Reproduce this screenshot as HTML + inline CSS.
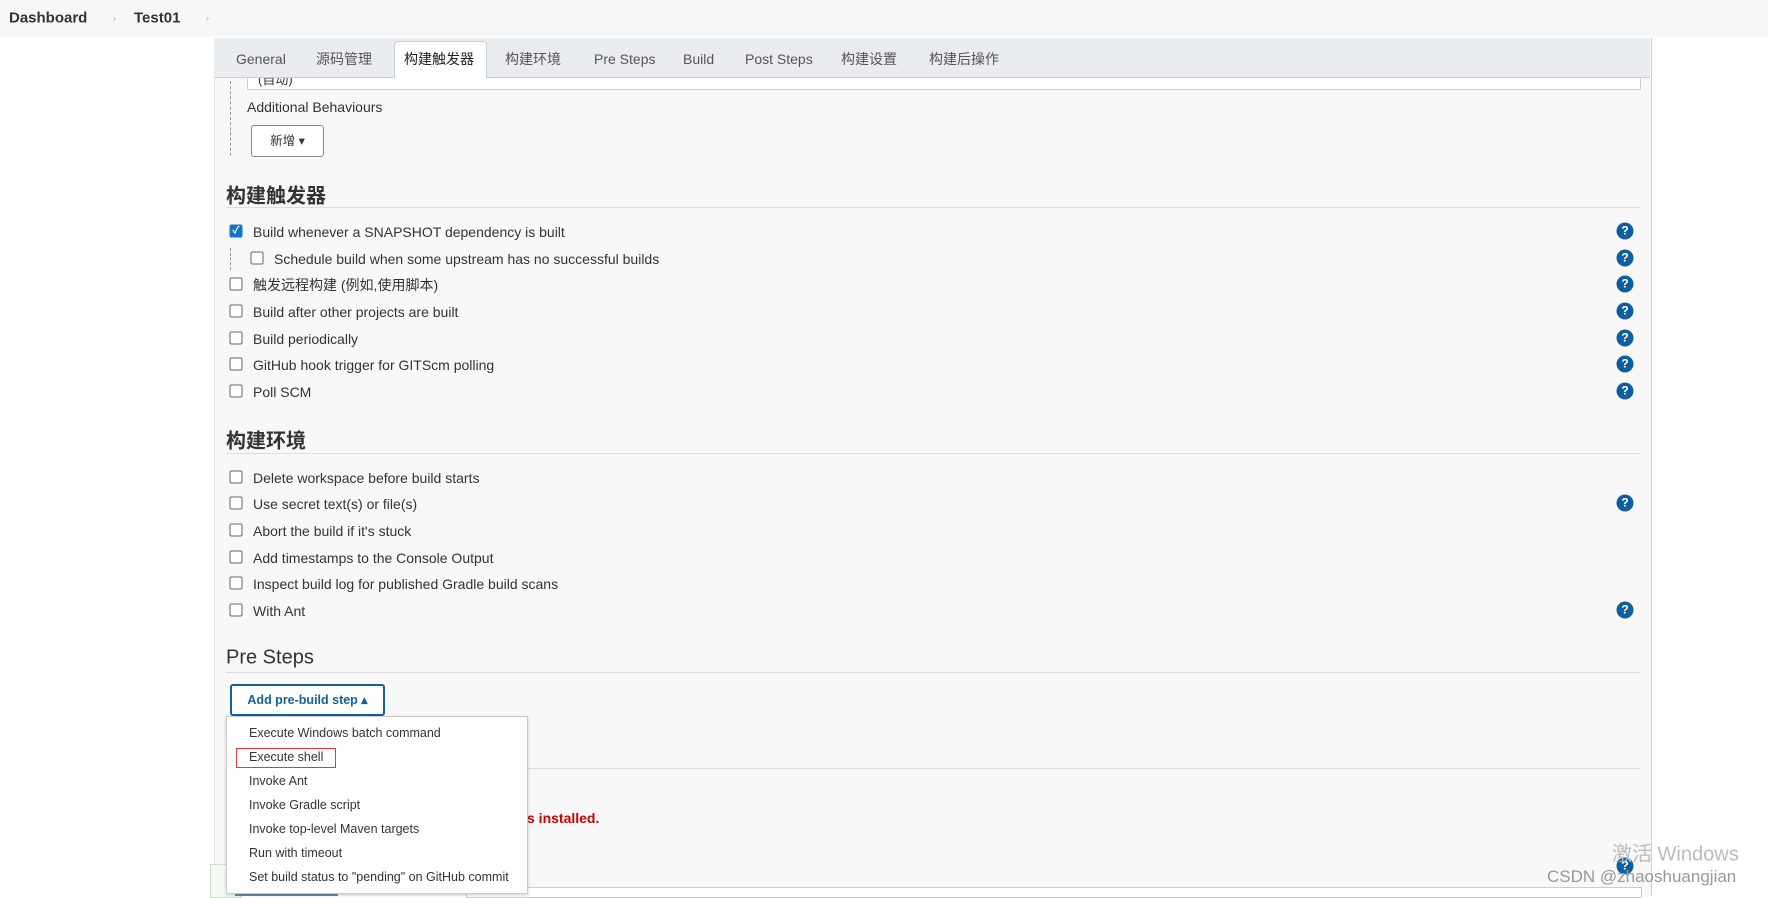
<!DOCTYPE html>
<html><head><meta charset="utf-8"><style>
body{margin:0;width:1768px;height:896px;background:#fff;position:relative;overflow:hidden;font-family:"Liberation Sans","Noto Sans CJK SC",sans-serif;color:#333}
.a{position:absolute;white-space:nowrap}
.t{font-size:14px;color:#333;transform:translateY(-50%)}
.cb{position:absolute;width:11px;height:11px;border:1px solid #666;border-radius:2px;background:#fff;transform:translate(-50%,-50%)}
.cb.on{background:#1a73c8;border-color:#1a73c8;color:#fff;font-size:10px;line-height:11px;text-align:center;font-weight:bold}
.h{position:absolute;width:17px;height:17px;border-radius:50%;background:#0f5f9e;color:#fff;font:bold 12px/17px "Liberation Sans",sans-serif;text-align:center;transform:translate(-50%,-50%)}
.line{position:absolute;height:1px;background:#ddd;left:226px;width:1414px}
.mi{position:absolute;left:249px;font-size:12.5px;color:#333;transform:translateY(-50%)}
</style></head><body>
<div class="a" style="left:0;top:0;width:1768px;height:37px;background:#f7f7f7"></div>
<div class="a t" style="left:9px;top:18px;font-weight:bold;font-size:15px">Dashboard</div>
<div class="a t" style="left:113px;top:18px;font-size:9px;color:#aaa">›</div>
<div class="a t" style="left:134px;top:18px;font-weight:bold;font-size:15px">Test01</div>
<div class="a t" style="left:206px;top:18px;font-size:9px;color:#aaa">›</div>
<div class="a" style="left:214px;top:38px;width:1436px;height:858px;background:#f8f8f8;border-right:1px solid #ccc;border-left:1px solid #e4e4e4"></div>
<div class="a" style="left:214px;top:38px;width:1436px;height:39px;background:#e9edf0;border-bottom:1px solid #c8cdd2"></div>
<div class="a" style="left:394px;top:41px;width:91px;height:37px;background:#fff;border:1px solid #c8cdd2;border-bottom:none;border-radius:4px 4px 0 0"></div>
<div class="a t" style="left:236px;top:59px;color:#555">General</div>
<div class="a t" style="left:316px;top:59px;color:#555">源码管理</div>
<div class="a t" style="left:404px;top:59px;color:#222">构建触发器</div>
<div class="a t" style="left:505px;top:59px;color:#555">构建环境</div>
<div class="a t" style="left:594px;top:59px;color:#555">Pre Steps</div>
<div class="a t" style="left:683px;top:59px;color:#555">Build</div>
<div class="a t" style="left:745px;top:59px;color:#555">Post Steps</div>
<div class="a t" style="left:841px;top:59px;color:#555">构建设置</div>
<div class="a t" style="left:929px;top:59px;color:#555">构建后操作</div>
<div class="a" style="left:247px;top:78px;width:1392px;height:11px;background:#fff;border:1px solid #ccc;border-top:none;overflow:hidden"><div style="position:absolute;left:10px;top:-9px;font-size:13px">(自动)</div></div>
<div class="a" style="left:230px;top:81px;height:75px;border-left:1px dashed #999"></div>
<div class="a t" style="left:247px;top:107px">Additional Behaviours</div>
<div class="a" style="left:251px;top:125px;width:71px;height:30px;border:1px solid #888;border-radius:3px;background:#fff;font-size:12.5px;line-height:30px;text-align:center">新增 ▾</div>
<div class="a t" style="left:226px;top:194px;font-size:20px;font-weight:bold;color:#333">构建触发器</div>
<div class="line" style="top:207px"></div>
<div class="cb on" style="left:236px;top:231px">✓</div><div class="a t" style="left:253px;top:232px">Build whenever a SNAPSHOT dependency is built</div>
<div class="a" style="left:230px;top:248px;height:22px;border-left:1px dashed #999"></div>
<div class="cb" style="left:257px;top:258px"></div><div class="a t" style="left:274px;top:259px">Schedule build when some upstream has no successful builds</div>
<div class="cb" style="left:236px;top:284px"></div><div class="a t" style="left:253px;top:285px">触发远程构建 (例如,使用脚本)</div>
<div class="cb" style="left:236px;top:311px"></div><div class="a t" style="left:253px;top:312px">Build after other projects are built</div>
<div class="cb" style="left:236px;top:338px"></div><div class="a t" style="left:253px;top:339px">Build periodically</div>
<div class="cb" style="left:236px;top:364px"></div><div class="a t" style="left:253px;top:365px">GitHub hook trigger for GITScm polling</div>
<div class="cb" style="left:236px;top:391px"></div><div class="a t" style="left:253px;top:392px">Poll SCM</div>
<div class="h" style="left:1625px;top:231px">?</div><div class="h" style="left:1625px;top:258px">?</div><div class="h" style="left:1625px;top:284px">?</div><div class="h" style="left:1625px;top:311px">?</div><div class="h" style="left:1625px;top:338px">?</div><div class="h" style="left:1625px;top:364px">?</div><div class="h" style="left:1625px;top:391px">?</div>
<div class="a t" style="left:226px;top:439px;font-size:20px;font-weight:bold">构建环境</div>
<div class="line" style="top:453px"></div>
<div class="cb" style="left:236px;top:477px"></div><div class="a t" style="left:253px;top:478px">Delete workspace before build starts</div>
<div class="cb" style="left:236px;top:503px"></div><div class="a t" style="left:253px;top:504px">Use secret text(s) or file(s)</div>
<div class="cb" style="left:236px;top:530px"></div><div class="a t" style="left:253px;top:531px">Abort the build if it's stuck</div>
<div class="cb" style="left:236px;top:557px"></div><div class="a t" style="left:253px;top:558px">Add timestamps to the Console Output</div>
<div class="cb" style="left:236px;top:583px"></div><div class="a t" style="left:253px;top:584px">Inspect build log for published Gradle build scans</div>
<div class="cb" style="left:236px;top:610px"></div><div class="a t" style="left:253px;top:611px">With Ant</div>
<div class="h" style="left:1625px;top:503px">?</div><div class="h" style="left:1625px;top:610px">?</div>
<div class="a t" style="left:226px;top:658px;font-size:20px">Pre Steps</div>
<div class="line" style="top:672px"></div>
<div class="line" style="top:768px"></div>
<div class="a" style="left:230px;top:684px;width:151px;height:28px;border:2px solid #14609a;border-radius:3px;background:#fff;color:#14609a;font-weight:bold;font-size:12.5px;line-height:28px;text-align:center">Add pre-build step ▴</div>
<div class="a t" style="left:527px;top:818px;color:#c00;font-weight:bold;font-size:14px">s installed.</div>
<div class="a" style="left:210px;top:864px;width:30px;height:32px;border:1px solid #cde0cd;background:#f4faf4"></div>
<div class="a" style="left:235px;top:891px;width:103px;height:5px;background:#5f8ba8"></div>
<div class="a" style="left:466px;top:887px;width:1174px;height:9px;background:#fff;border:1px solid #ccc"></div>
<div class="h" style="left:1625px;top:866px">?</div>
<div class="a" style="left:226px;top:716px;width:300px;height:176px;background:#fff;border:1px solid #ccc;box-shadow:0 1px 3px rgba(0,0,0,.2)"></div>
<div class="mi" style="top:733px">Execute Windows batch command</div>
<div class="mi" style="top:757px">Execute shell</div>
<div class="a" style="left:236px;top:748px;width:98px;height:18px;border:1px solid #e33"></div>
<div class="mi" style="top:781px">Invoke Ant</div>
<div class="mi" style="top:805px">Invoke Gradle script</div>
<div class="mi" style="top:829px">Invoke top-level Maven targets</div>
<div class="mi" style="top:853px">Run with timeout</div>
<div class="mi" style="top:877px">Set build status to "pending" on GitHub commit</div>
<div class="a t" style="left:1612px;top:852px;font-size:20px;color:#bbb">激活 Windows</div>
<div class="a t" style="left:1547px;top:877px;font-size:17px;color:#999">CSDN @zhaoshuangjian</div>
</body></html>
